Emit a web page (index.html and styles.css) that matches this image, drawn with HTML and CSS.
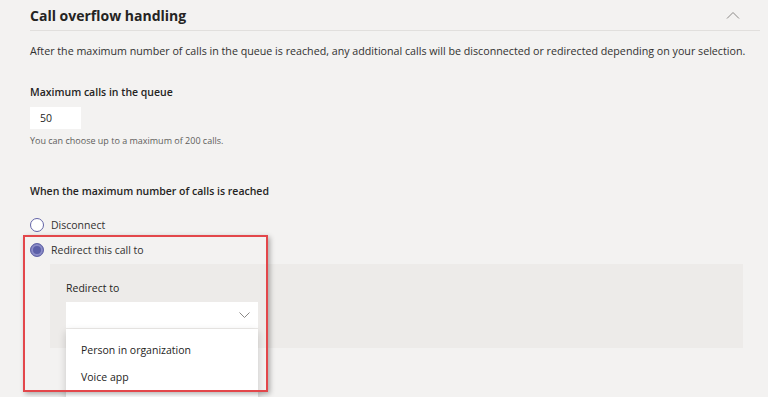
FILE: index.html
```html
<!DOCTYPE html>
<html lang="en">
<head>
  <title>Call overflow handling</title>
  <link rel="stylesheet" href="styles.css">
</head>
<body>
  <div class="section">
    <!-- Header -->
    <div class="section-head">
      <h2>Call overflow handling</h2>
      <svg class="chevron-up" width="14" height="8" viewBox="0 0 14 8"><path d="M1 7.5 L7 1.5 L13 7.5" fill="none" stroke="#8a8886" stroke-width="1"/></svg>
    </div>

    <p class="intro">After the maximum number of calls in the queue is reached, any additional calls will be disconnected or redirected depending on your selection.</p>

    <div class="field">
      <div class="label">Maximum calls in the queue</div>
      <div class="text-input">50</div>
      <div class="hint">You can choose up to a maximum of 200 calls.</div>
    </div>

    <div class="field choices">
      <div class="label">When the maximum number of calls is reached</div>
      <div class="radio"><span class="dot"></span>Disconnect</div>
      <div class="radio"><span class="dot checked"></span>Redirect this call to</div>

      <div class="redirect-box">
        <div class="label plain">Redirect to</div>
        <div class="dropdown">
          <svg width="11" height="6" viewBox="0 0 11 6"><path d="M0.5 0.5 L5.5 5.5 L10.5 0.5" fill="none" stroke="#8a8886" stroke-width="1"/></svg>
          <div class="menu">
            <div class="option">Person in organization</div>
            <div class="option">Voice app</div>
          </div>
        </div>
      </div>

      <div class="highlight"></div>
    </div>
  </div>
</body>
</html>
```

FILE: styles.css
```css
body {
  margin: 0;
  background-color: #f3f2f1;
  font-family: "Open Sans", Arial, sans-serif;
  color: #252423;
  height: 397px;
  overflow: hidden;
}

.section {
  padding: 0 8px 0 30px;
}

/* Header */
.section-head {
  display: flex;
  justify-content: space-between;
  align-items: center;
  height: 30px;
  border-bottom: 1px solid #e1dfdd;
}

.section-head h2 {
  margin: 0;
  font-size: 14px;
  font-weight: 700;
  color: #252423;
}

.chevron-up {
  margin-right: 20px;
  margin-top: -1px;
}

.intro {
  margin: 12px 0 0 0;
  font-size: 10.7px;
  line-height: 16px;
  color: #323130;
  white-space: nowrap;
}

/* Fields */
.field {
  margin-top: 25px;
}

.label {
  font-size: 10.5px;
  font-weight: 600;
  line-height: 16px;
  color: #252423;
}

.label.plain {
  font-weight: 400;
}

.text-input {
  width: 41px;
  height: 22px;
  margin-top: 7px;
  padding-left: 10px;
  background-color: white;
  font-size: 10.5px;
  line-height: 22px;
}

.hint {
  margin-top: 5px;
  font-size: 9px;
  color: #605e5c;
}

.choices {
  position: relative;
  margin-top: 36px;
}

.choices .label {
  margin-bottom: 13px;
}

.radio {
  display: flex;
  align-items: center;
  height: 25px;
  font-size: 10.5px;
  color: #323130;
}

.dot {
  width: 12px;
  height: 12px;
  border: 1px solid #6264a7;
  border-radius: 50%;
  background-color: white;
  margin-right: 7px;
  box-sizing: content-box;
}

.dot.checked {
  background-color: #5b5fa8;
  box-shadow: inset 0 0 0 2px #8b8cc7;
}

/* Redirect panel */
.redirect-box {
  margin: 2px 17px 0 20px;
  height: 84px;
  padding: 16px 0 0 16px;
  box-sizing: border-box;
  background-color: #edebe9;
}

.redirect-box .label {
  margin-bottom: 0;
}

.dropdown {
  position: relative;
  width: 192px;
  height: 26px;
  margin-top: 6px;
  background-color: white;
  display: flex;
  justify-content: flex-end;
  align-items: center;
  padding-right: 8px;
  box-sizing: border-box;
}

.menu {
  position: absolute;
  top: 27px;
  left: 0;
  width: 192px;
  background-color: white;
  box-shadow: 0 3px 8px rgba(0, 0, 0, 0.18);
  padding: 8px 0 12px 0;
  z-index: 2;
}

.option {
  height: 27px;
  line-height: 27px;
  padding-left: 15px;
  font-size: 10.5px;
  color: #252423;
}

/* Red callout */
.highlight {
  position: absolute;
  left: -7px;
  top: 52px;
  width: 241px;
  height: 153px;
  border: 2px solid #e3474b;
  box-shadow: 2px 2px 5px rgba(0, 0, 0, 0.3);
  z-index: 3;
}
```
